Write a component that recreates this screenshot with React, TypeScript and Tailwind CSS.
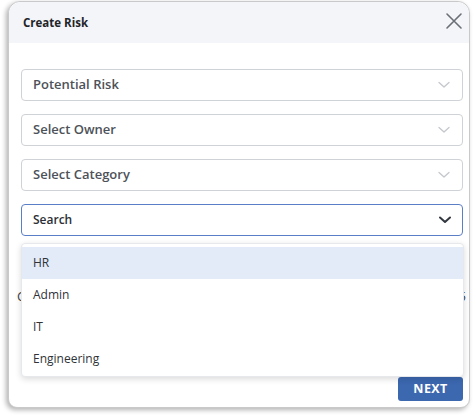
import React from "react";

const font = { fontFamily: '"Open Sans", "Noto Sans", sans-serif' };

function Chevron({ dark }: { dark?: boolean }) {
  return (
    <svg width="12" height="8" viewBox="0 0 12 8" fill="none">
      <path
        d="M1 1.5 L6 6 L11 1.5"
        stroke={dark ? "#333840" : "#c4c7cc"}
        strokeWidth={dark ? 2 : 1.3}
        strokeLinecap="round"
        strokeLinejoin="round"
      />
    </svg>
  );
}

function Field({ label }: { label: string }) {
  return (
    <div className="h-[32px] flex items-center justify-between pl-[11px] pr-[12px] rounded-[4px] border border-[#cfd2d6] bg-white">
      <span className="text-[13px] font-semibold text-[#4d5259]">{label}</span>
      <Chevron />
    </div>
  );
}

export default function App() {
  return (
    <div className="w-[474px] h-[416px] bg-white relative overflow-hidden" style={font}>
      <div className="absolute left-[8px] top-[1px] w-[462px] h-[407px] bg-white rounded-[12px] rounded-b-[9px] border border-[#c9c9c9] shadow-[-2px_2px_5px_rgba(0,0,0,0.3)] flex flex-col">
        <div className="h-[41px] bg-[#f3f5f9] rounded-t-[12px] flex items-center justify-between pl-[14px] pr-[6px]">
          <span className="text-[11.5px] font-bold text-[#222428]">Create Risk</span>
          <svg width="18" height="18" viewBox="0 0 18 18" fill="none" className="mb-[3px]">
            <path d="M2 2 L16 16 M16 2 L2 16" stroke="#6b6f76" strokeWidth="1.6" strokeLinecap="round" />
          </svg>
        </div>
        <div className="flex flex-col gap-[13px] pt-[26px] pl-[12px] pr-[6px]">
          <Field label="Potential Risk" />
          <Field label="Select Owner" />
          <Field label="Select Category" />
          <div className="h-[32px] flex items-center justify-between pl-[11px] pr-[11px] rounded-[4px] border-[1.5px] border-[#5b7fc6] bg-white">
            <span className="text-[12px] font-semibold text-[#2c3036]">Search</span>
            <Chevron dark />
          </div>
        </div>
        <div className="mt-[51px] flex items-center justify-between pl-[8px] pr-[3px] h-[20px] text-[13px] text-[#444]">
          <span>Criticality</span>
          <span>1-5</span>
        </div>
        <div className="mt-[70px] flex justify-end pr-[6px]">
          <button className="w-[65px] h-[24px] bg-[#3c68b0] rounded-[3px] text-white text-[12.5px] font-bold tracking-[0.4px] flex items-center justify-center">
            NEXT
          </button>
        </div>

        <div className="absolute left-[12px] top-[241px] w-[443px] h-[134px] bg-white rounded-[4px] border border-[#e6e8eb] shadow-[0_2px_6px_rgba(0,0,0,0.15)] py-[3px] text-[12px] text-[#2f3338]">
          <div className="h-[32px] flex items-center pl-[11px] bg-[#e3ebf9]">HR</div>
          <div className="h-[32px] flex items-center pl-[11px]">Admin</div>
          <div className="h-[32px] flex items-center pl-[11px]">IT</div>
          <div className="h-[32px] flex items-center pl-[11px]">Engineering</div>
        </div>
      </div>
    </div>
  );
}
